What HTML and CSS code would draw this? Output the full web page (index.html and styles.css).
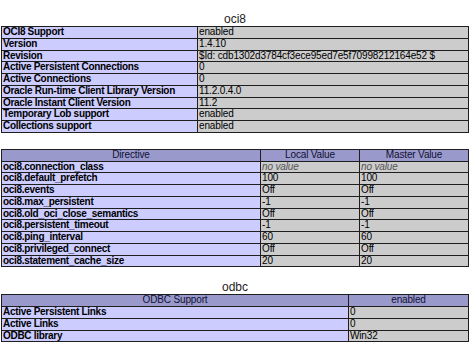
FILE: index.html
```html
<!DOCTYPE html>
<html>
<head>
<meta charset="utf-8">
<link rel="stylesheet" href="styles.css">
</head>
<body>
<div class="center">
  <h2 class="title first">oci8</h2>
  <table class="t1">
    <colgroup><col class="c-e1"><col></colgroup>
    <tr><td class="e">OCI8 Support</td><td class="v">enabled</td></tr>
    <tr><td class="e">Version</td><td class="v">1.4.10</td></tr>
    <tr><td class="e">Revision</td><td class="v">$Id: cdb1302d3784cf3ece95ed7e5f70998212164e52 $</td></tr>
    <tr><td class="e">Active Persistent Connections</td><td class="v">0</td></tr>
    <tr><td class="e">Active Connections</td><td class="v">0</td></tr>
    <tr><td class="e">Oracle Run-time Client Library Version</td><td class="v">11.2.0.4.0</td></tr>
    <tr><td class="e">Oracle Instant Client Version</td><td class="v">11.2</td></tr>
    <tr><td class="e">Temporary Lob support</td><td class="v">enabled</td></tr>
    <tr><td class="e">Collections support</td><td class="v">enabled</td></tr>
  </table>
  <table class="t2">
    <colgroup><col class="c-dir"><col class="c-loc"><col></colgroup>
    <tr class="h"><th>Directive</th><th>Local Value</th><th>Master Value</th></tr>
    <tr><td class="e">oci8.connection_class</td><td class="v"><i>no value</i></td><td class="v"><i>no value</i></td></tr>
    <tr><td class="e">oci8.default_prefetch</td><td class="v">100</td><td class="v">100</td></tr>
    <tr><td class="e">oci8.events</td><td class="v">Off</td><td class="v">Off</td></tr>
    <tr><td class="e">oci8.max_persistent</td><td class="v">-1</td><td class="v">-1</td></tr>
    <tr><td class="e">oci8.old_oci_close_semantics</td><td class="v">Off</td><td class="v">Off</td></tr>
    <tr><td class="e">oci8.persistent_timeout</td><td class="v">-1</td><td class="v">-1</td></tr>
    <tr><td class="e">oci8.ping_interval</td><td class="v">60</td><td class="v">60</td></tr>
    <tr><td class="e">oci8.privileged_connect</td><td class="v">Off</td><td class="v">Off</td></tr>
    <tr><td class="e">oci8.statement_cache_size</td><td class="v">20</td><td class="v">20</td></tr>
  </table>
  <h2 class="title second">odbc</h2>
  <table class="t3">
    <colgroup><col class="c-odbc"><col></colgroup>
    <tr class="h"><th>ODBC Support</th><th>enabled</th></tr>
    <tr><td class="e">Active Persistent Links</td><td class="v">0</td></tr>
    <tr><td class="e">Active Links</td><td class="v">0</td></tr>
    <tr><td class="e">ODBC library</td><td class="v">Win32</td></tr>
  </table>
</div>
</body>
</html>
```
FILE: styles.css
```css
html, body {
  margin: 0;
  padding: 0;
  background: #fff;
}
body {
  font-family: "Liberation Sans", Arial, sans-serif;
  color: #000;
}
.center {
  width: 468px;
  margin-left: 1px;
}
.title {
  font-size: 12px;
  line-height: 14px;
  font-weight: normal;
  text-align: center;
  color: #222;
  margin: 0;
}
.first {
  margin-top: 12px;
}
.second {
  margin-top: 13px;
}
table {
  width: 468px;
  border-collapse: collapse;
  table-layout: fixed;
}
.t2 {
  margin-top: 16px;
}
td, th {
  border: 1px solid #1e1e1e;
  font-size: 10px;
  line-height: 10.75px;
  padding: 0 1px;
  white-space: nowrap;
  overflow: hidden;
  text-align: left;
}
.c-e1 { width: 196px; }
.c-dir { width: 259px; }
.c-loc { width: 99px; }
.c-odbc { width: 347px; }
.e {
  background: #ccccff;
  font-weight: bold;
  letter-spacing: -0.3px;
}
.v {
  background: #cccccc;
  letter-spacing: -0.15px;
}
.v i {
  color: #555;
}
.h th {
  background: #9999cc;
  font-weight: normal;
  text-align: center;
  color: #111133;
  letter-spacing: -0.15px;
}
```
